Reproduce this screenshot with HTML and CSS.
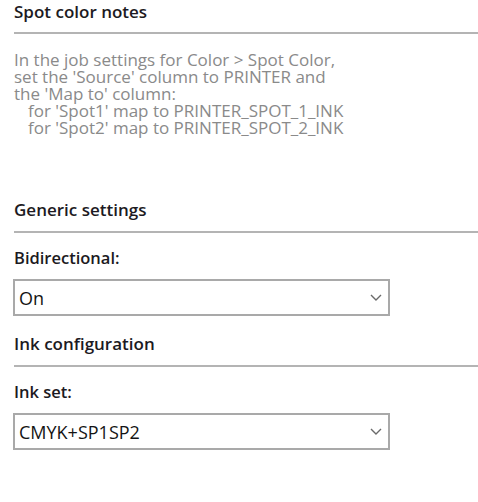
FILE: index.html
```html
<!DOCTYPE html>
<html>
<head>
<meta charset="utf-8">
<link rel="stylesheet" href="styles.css">
</head>
<body>
<div class="page">
  <section class="group first">
    <h2 class="group-title">Spot color notes</h2>
    <div class="rule"></div>
    <div class="notes">
      <div>In the job settings for Color &gt; Spot Color,</div>
      <div>set the 'Source' column to PRINTER and</div>
      <div>the 'Map to' column:</div>
      <div class="indent">for 'Spot1' map to PRINTER_SPOT_1_INK</div>
      <div class="indent">for 'Spot2' map to PRINTER_SPOT_2_INK</div>
    </div>
  </section>

  <section class="group generic">
    <h2 class="group-title">Generic settings</h2>
    <div class="rule"></div>
    <label class="field-label">Bidirectional:</label>
    <div class="select">
      <span class="select-value">On</span>
      <svg class="chevron" width="12" height="7" viewBox="0 0 12 7"><polyline points="1,1 6,6 11,1" fill="none" stroke="#6a6a6a" stroke-width="1.4"/></svg>
    </div>
  </section>

  <section class="group ink">
    <h2 class="group-title">Ink configuration</h2>
    <div class="rule"></div>
    <label class="field-label">Ink set:</label>
    <div class="select">
      <span class="select-value">CMYK+SP1SP2</span>
      <svg class="chevron" width="12" height="7" viewBox="0 0 12 7"><polyline points="1,1 6,6 11,1" fill="none" stroke="#6a6a6a" stroke-width="1.4"/></svg>
    </div>
  </section>
</div>
</body>
</html>
```

FILE: styles.css
```css
html, body {
  margin: 0;
  padding: 0;
  background: #ffffff;
}

.page {
  padding: 0 0 0 14px;
  font-family: "Open Sans", "Noto Sans", sans-serif;
  color: #1b1b1b;
}

.group {
  display: flex;
  flex-direction: column;
  align-items: flex-start;
}

.group-title {
  margin: 0;
  font-size: 17px;
  line-height: 23px;
  font-weight: 600;
  color: #1c1a22;
}

.rule {
  align-self: stretch;
  height: 2px;
  background: #b4b4b4;
  margin-top: 10px;
}

.first .rule {
  margin-top: 9px;
}

.notes {
  margin-top: 17px;
  font-size: 17px;
  line-height: 17px;
  color: #8a8a8a;
}

.indent {
  padding-left: 14px;
}

.generic {
  margin-top: 62px;
}

.ink {
  margin-top: 16px;
}

.field-label {
  margin-top: 15px;
  font-size: 16.5px;
  line-height: 20px;
  font-weight: 600;
  color: #1c1a22;
}

.select {
  margin-top: 11px;
  margin-left: -1px;
  box-sizing: border-box;
  width: 377px;
  height: 37px;
  border: 2px solid #a9a9a9;
  display: flex;
  align-items: center;
  justify-content: space-between;
  padding: 0 6px 0 4px;
}

.select-value {
  font-size: 18px;
  color: #141414;
}

.chevron {
  display: block;
}
```
